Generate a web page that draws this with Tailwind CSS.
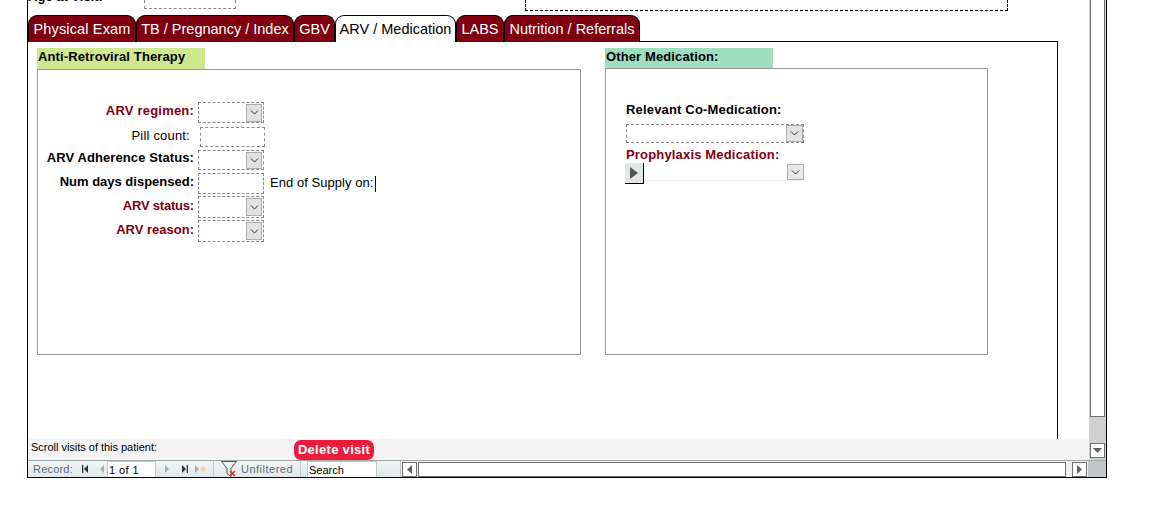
<!DOCTYPE html>
<html lang="en">
<head>
<meta charset="UTF-8">
<title>ARV / Medication</title>
<script src="https://cdn.jsdelivr.net/npm/@tailwindcss/browser@4"></script>
</head>
<body class="bg-white overflow-hidden font-['Liberation_Sans',Arial,sans-serif] text-black">
<div class="ml-[27px] w-[1080px] h-[478px] border-l border-r border-b border-black flex flex-col overflow-hidden">

  <!-- form + vertical scrollbar -->
  <div class="flex h-[439px]">
    <div class="w-[1061px] flex flex-col">
      <!-- clipped row above the tabs -->
      <div class="h-[15px] flex items-start overflow-hidden">
        <div class="w-[116px] -mt-[11px] text-[13px] font-bold leading-[15px]">Age at Visit:</div>
        <div class="w-[92px] h-[9px] border-r border-b border-l border-dashed border-[#888888]"></div>
        <div class="ml-[289px] w-[483px] h-[11px] border-r border-b border-l border-dashed border-black"></div>
      </div>

      <!-- tabs -->
      <div class="flex h-[27px] text-[14.5px] leading-[26px] relative z-10">
        <div class="w-[108px] rounded-t-[9px] bg-[#7f000f] text-white border border-b-0 border-black text-center tracking-[0.15px]">Physical Exam</div>
        <div class="w-[158px] rounded-t-[9px] bg-[#7f000f] text-white border border-b-0 border-black text-center">TB / Pregnancy / Index</div>
        <div class="w-[41px] rounded-t-[9px] bg-[#7f000f] text-white border border-b-0 border-black text-center">GBV</div>
        <div class="w-[121px] h-[27px] rounded-t-[9px] bg-white border border-b-0 border-black text-center">ARV / Medication</div>
        <div class="w-[48px] rounded-t-[9px] bg-[#7f000f] text-white border border-b-0 border-black text-center">LABS</div>
        <div class="w-[136px] rounded-t-[9px] bg-[#7f000f] text-white border border-b-0 border-black text-center">Nutrition / Referrals</div>
      </div>

      <!-- tab page -->
      <div class="-mt-px w-[1030px] h-[398px] border-t border-r border-black flex pl-[9px] pt-[6px]">
        <!-- ART section -->
        <div class="w-[544px]">
          <div class="w-[168px] h-[21px] bg-[#cfe88f] text-[13px] font-bold leading-[17px] pl-px tracking-[0.12px]">Anti-Retroviral Therapy</div>
          <div class="h-[286px] border border-[#999999] pt-[32px] text-[13px] font-bold">
            <div class="flex items-center h-[21px]">
              <div class="w-[156px] pb-[4px] text-right text-[#7f000f] tracking-[0.2px]">ARV regimen:</div>
              <div class="ml-[4px] w-[66px] h-[21px] border border-dashed border-[#888888] flex justify-end items-center pr-px">
                <div class="w-[16px] h-[18px] bg-[#e1e1e1] border border-[#adadad] flex items-center justify-center"><svg width="9" height="5" viewBox="0 0 9 5" fill="none" stroke="#333" stroke-width="1"><path d="M1 0.5l3.5 3.5 3.5-3.5"/></svg></div>
              </div>
            </div>
            <div class="flex items-center h-[20px] mt-[4px] font-normal">
              <div class="w-[152px] pb-[2px] text-right tracking-[0.2px]">Pill count:</div>
              <div class="ml-[10px] w-[65px] h-[20px] border border-dashed border-[#888888]"></div>
            </div>
            <div class="flex items-center h-[20px] mt-[3px]">
              <div class="w-[156px] pb-[4px] text-right tracking-[0.1px] whitespace-nowrap">ARV Adherence Status:</div>
              <div class="ml-[4px] w-[66px] h-[20px] border border-dashed border-[#888888] flex justify-end items-center pr-px">
                <div class="w-[16px] h-[17px] bg-[#e1e1e1] border border-[#adadad] flex items-center justify-center"><svg width="9" height="5" viewBox="0 0 9 5" fill="none" stroke="#333" stroke-width="1"><path d="M1 0.5l3.5 3.5 3.5-3.5"/></svg></div>
              </div>
            </div>
            <div class="flex items-center h-[21px] mt-[3px]">
              <div class="w-[156px] pb-[4px] text-right">Num days dispensed:</div>
              <div class="ml-[4px] w-[66px] h-[21px] border border-dashed border-[#888888]"></div>
              <div class="ml-[6px] pr-[2px] h-[16px] border-r border-black font-normal text-[13px] leading-[13px] tracking-[0.05px] whitespace-nowrap">End of Supply on:</div>
            </div>
            <div class="flex items-center h-[22px] mt-[2px]">
              <div class="w-[156px] pb-[2px] text-right text-[#7f000f] tracking-[-0.2px]">ARV status:</div>
              <div class="ml-[4px] w-[66px] h-[22px] border border-dashed border-[#888888] flex justify-end items-center pr-px">
                <div class="w-[16px] h-[18px] bg-[#e1e1e1] border border-[#adadad] flex items-center justify-center"><svg width="9" height="5" viewBox="0 0 9 5" fill="none" stroke="#333" stroke-width="1"><path d="M1 0.5l3.5 3.5 3.5-3.5"/></svg></div>
              </div>
            </div>
            <div class="flex items-center h-[22px] mt-[2px]">
              <div class="w-[156px] pb-[2px] text-right text-[#7f000f]">ARV reason:</div>
              <div class="ml-[4px] w-[66px] h-[22px] border border-dashed border-[#888888] flex justify-end items-center pr-px">
                <div class="w-[16px] h-[18px] bg-[#e1e1e1] border border-[#adadad] flex items-center justify-center"><svg width="9" height="5" viewBox="0 0 9 5" fill="none" stroke="#333" stroke-width="1"><path d="M1 0.5l3.5 3.5 3.5-3.5"/></svg></div>
              </div>
            </div>
          </div>
        </div>

        <!-- other medication section -->
        <div class="ml-[24px] w-[383px]">
          <div class="w-[168px] h-[20px] bg-[#9fdfbf] text-[13px] font-bold leading-[17px] pl-px tracking-[0.12px]">Other Medication:</div>
          <div class="h-[287px] border border-[#999999] pt-[33px] pl-[20px] text-[13px] font-bold">
            <div class="h-[16px] leading-[16px] tracking-[0.17px]">Relevant Co-Medication:</div>
            <div class="mt-[6px] w-[178px] h-[19px] border border-dashed border-[#888888] flex justify-end items-center">
              <div class="w-[17px] h-[17px] bg-[#e1e1e1] border border-[#adadad] flex items-center justify-center"><svg width="9" height="5" viewBox="0 0 9 5" fill="none" stroke="#333" stroke-width="1"><path d="M1 0.5l3.5 3.5 3.5-3.5"/></svg></div>
            </div>
            <div class="mt-[4px] h-[16px] leading-[16px] text-[#7f000f] tracking-[0.17px]">Prophylaxis Medication:</div>
            <div class="-ml-px w-[179px] h-[18px] flex items-start border-b border-[#eeeeee]">
              <div class="w-[19px] h-[21px] bg-[#e3e7e3] border-r border-b border-black flex items-center justify-center"><svg width="8" height="12" viewBox="0 0 8 12"><path d="M0 0l8 6-8 6z" fill="#555"/></svg></div>
              <div class="ml-auto mt-px w-[17px] h-[16px] bg-[#e8e8e8] border border-[#adadad] flex items-center justify-center"><svg width="9" height="5" viewBox="0 0 9 5" fill="none" stroke="#333" stroke-width="1"><path d="M1 0.5l3.5 3.5 3.5-3.5"/></svg></div>
            </div>
          </div>
        </div>
      </div>
    </div>

    <!-- vertical scrollbar -->
    <div class="w-[17px] h-[460px] bg-[#d0d0d0] flex flex-col relative z-20">
      <div class="h-[417px] bg-white border border-t-0 border-[#707070] mx-px"></div>
      <div class="mt-[26px] h-[15px] bg-white border border-[#707070] mx-px flex items-center justify-center"><svg width="9" height="5" viewBox="0 0 9 5"><path d="M0 0h9l-4.5 5z" fill="#606060"/></svg></div>
    </div>
  </div>

  <!-- scroll visits strip -->
  <div class="h-[21px] w-[1061px] bg-[#f4f4f4] flex items-center text-[11px] pl-[3px]">
    <div class="w-[263px] -mt-[4px] tracking-[-0.02px]">Scroll visits of this patient:</div>
    <div class="w-[80px] h-[20px] rounded-[7px] bg-[#ed1c3a] text-white text-[13px] font-bold leading-[20px] text-center tracking-[0.3px]">Delete visit</div>
  </div>

  <!-- record navigation bar -->
  <div class="h-[17px] flex items-stretch text-[11px] leading-[16px] bg-gradient-to-b from-[#f2f5f5] to-[#dfe8e8] border-t border-[#a0a8a8]">
    <div class="w-[186px] flex items-center pl-[5px] text-[#5c6b78] tracking-[0.2px] border-r border-[#c0c8c8]">
      <span class="w-[48px]">Record:</span>
      <svg width="8" height="8" viewBox="0 0 8 8" class="mr-[10px]"><path d="M1 0v8h1.3V0zM7 0L3 4l4 4z" fill="#333"/></svg>
      <svg width="5" height="8" viewBox="0 0 5 8"><path d="M5 0L1 4l4 4z" fill="#aaa"/></svg>
      <div class="ml-[3px] w-[49px] h-[16px] bg-white border border-[#c0c8c8] border-b-0 text-black pl-[1px] leading-[16px] tracking-[0.4px]">1 of 1</div>
      <svg width="5" height="8" viewBox="0 0 5 8" class="ml-[9px]"><path d="M0 0l4 4-4 4z" fill="#aaa"/></svg>
      <svg width="8" height="8" viewBox="0 0 8 8" class="ml-[11px]"><path d="M1 0l4 4-4 4zM5.7 0v8H7V0z" fill="#333"/></svg>
      <svg width="11" height="8" viewBox="0 0 11 8" class="ml-[6px]"><path d="M0 0l4 4-4 4z" fill="#aaa"/><path d="M8 1v6M5 4h6M6 2l4 4M10 2L6 6" stroke="#f0c890" stroke-width="1"/></svg>
    </div>
    <div class="w-[87px] flex items-center pl-[7px] text-[#5c6b78] tracking-[0.5px] border-r border-[#c0c8c8]">
      <svg width="17" height="16" viewBox="0 0 17 16" class="shrink-0" fill="none"><path d="M0.5 0.5h15l-5.5 7v8l-4-3v-5z" stroke="#555"/><path d="M9 10l5 5M14 10l-5 5" stroke="#e0202a" stroke-width="1.4"/></svg>
      <span class="ml-[3px]">Unfiltered</span>
    </div>
    <div class="w-[100px] flex pl-[6px] border-r border-[#c0c8c8]">
      <div class="w-[70px] h-[16px] bg-white border border-[#c0c8c8] border-b-0 text-black pl-px leading-[16px]">Search</div>
    </div>
    <!-- horizontal scrollbar -->
    <div class="w-[687px] flex items-center bg-[#f0f0f0] pl-px">
      <div class="w-[15px] h-[15px] bg-white border border-[#707070] flex items-center justify-center"><svg width="5" height="9" viewBox="0 0 5 9"><path d="M5 0L0 4.5 5 9z" fill="#606060"/></svg></div>
      <div class="ml-px w-[648px] h-[15px] bg-white border border-[#707070]"></div>
      <div class="ml-[6px] w-[15px] h-[15px] bg-white border border-[#707070] flex items-center justify-center"><svg width="5" height="9" viewBox="0 0 5 9"><path d="M0 0l5 4.5L0 9z" fill="#606060"/></svg></div>
    </div>
    <div class="flex-1 bg-[#bfc7cc]"></div>
  </div>
</div>
</body>
</html>
